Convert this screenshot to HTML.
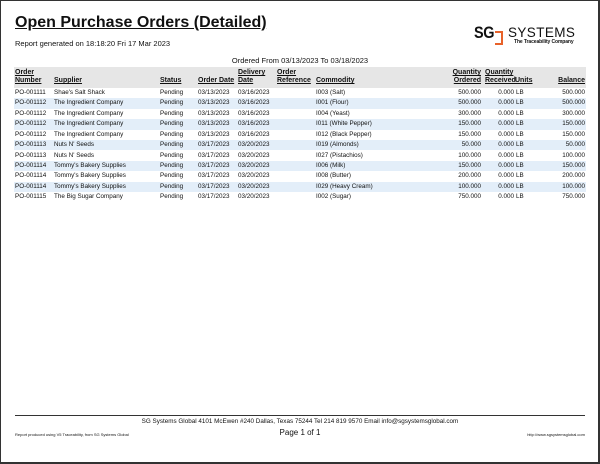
<!DOCTYPE html>
<html><head><style>
*{margin:0;padding:0;box-sizing:border-box}
body{width:600px;height:464px;background:#fff;font-family:"Liberation Sans",Arial,sans-serif;color:#111;position:relative;overflow:hidden}
.frame{position:absolute;left:0;top:0;width:600px;height:464px;border:1px solid #333;border-right:2px solid #333;border-bottom:2px solid #333}
.a{position:absolute;white-space:nowrap}
.h{position:absolute;left:14px;top:67px;width:572px;height:21px;background:#e6e6e6}
.hc{position:absolute;font-size:7px;font-weight:bold;text-decoration:underline;line-height:8px}
.row{position:absolute;left:14px;width:572px;height:10.4px;font-size:6.3px;line-height:10.4px}
.row span{position:absolute}
.r{text-align:right}
</style></head><body>
<div class="frame"></div>
<div class="a" style="left:15px;top:14px;font-size:16px;font-weight:bold;text-decoration:underline">Open Purchase Orders (Detailed)</div>
<div class="a" style="left:15px;top:39px;font-size:7.5px">Report generated on 18:18:20 Fri 17 Mar 2023</div>
<div class="a" style="left:474px;top:23px;font-size:17px;font-weight:bold;letter-spacing:-0.5px;transform:scaleX(0.85);transform-origin:0 0">SG</div>
<div class="a" style="left:495px;top:31px;width:8px;height:14px;border:2px solid #e8622a;border-left:none"></div>
<div class="a" style="left:508px;top:25px;font-size:13.5px;letter-spacing:0.4px">SYSTEMS</div>
<div class="a" style="left:514px;top:38.5px;font-size:5px;font-weight:bold;letter-spacing:-0.1px">The Traceability Company</div>
<div class="a" style="left:0;width:600px;text-align:center;top:56px;font-size:7.5px">Ordered From 03/13/2023 To 03/18/2023</div>
<div class="h"></div>
<div class="hc" style="left:15px;top:69px">Order<br>Number</div>
<div class="hc" style="left:54px;top:77px">Supplier</div>
<div class="hc" style="left:160px;top:77px">Status</div>
<div class="hc" style="left:198px;top:77px">Order Date</div>
<div class="hc" style="left:238px;top:69px">Delivery<br>Date</div>
<div class="hc" style="left:277px;top:69px">Order<br>Reference</div>
<div class="hc" style="left:316px;top:77px">Commodity</div>
<div class="hc r" style="left:440px;width:41px;top:69px">Quantity<br>Ordered</div>
<div class="hc" style="left:485px;top:69px">Quantity<br>Received</div>
<div class="hc" style="left:515px;top:77px">Units</div>
<div class="hc r" style="left:540px;width:45px;top:77px">Balance</div>
<div id="rows"></div>
<script>
var d=[["PO-001111","Shae's Salt Shack","03/13/2023","03/16/2023","I003 (Salt)","500.000"],
["PO-001112","The Ingredient Company","03/13/2023","03/16/2023","I001 (Flour)","500.000"],
["PO-001112","The Ingredient Company","03/13/2023","03/16/2023","I004 (Yeast)","300.000"],
["PO-001112","The Ingredient Company","03/13/2023","03/16/2023","I011 (White Pepper)","150.000"],
["PO-001112","The Ingredient Company","03/13/2023","03/16/2023","I012 (Black Pepper)","150.000"],
["PO-001113","Nuts N' Seeds","03/17/2023","03/20/2023","I019 (Almonds)","50.000"],
["PO-001113","Nuts N' Seeds","03/17/2023","03/20/2023","I027 (Pistachios)","100.000"],
["PO-001114","Tommy's Bakery Supplies","03/17/2023","03/20/2023","I006 (Milk)","150.000"],
["PO-001114","Tommy's Bakery Supplies","03/17/2023","03/20/2023","I008 (Butter)","200.000"],
["PO-001114","Tommy's Bakery Supplies","03/17/2023","03/20/2023","I029 (Heavy Cream)","100.000"],
["PO-001115","The Big Sugar Company","03/17/2023","03/20/2023","I002 (Sugar)","750.000"]];
var h="";d.forEach(function(r,i){h+='<div class="row" style="top:'+(87.8+i*10.45)+'px;background:'+(i%2?'#e3eef9':'#fff')+'"><span style="left:1px">'+r[0]+'</span><span style="left:40px">'+r[1]+'</span><span style="left:146px">Pending</span><span style="left:184px">'+r[2]+'</span><span style="left:224px">'+r[3]+'</span><span style="left:302px">'+r[4]+'</span><span class="r" style="left:420px;width:47px">'+r[5]+'</span><span class="r" style="left:470px;width:30px">0.000</span><span style="left:502px">LB</span><span class="r" style="left:520px;width:51px">'+r[5]+'</span></div>'});
document.getElementById("rows").innerHTML=h;
</script>
<div class="a" style="left:15px;top:415px;width:570px;height:1px;background:#333"></div>
<div class="a" style="left:0;width:600px;text-align:center;top:418px;font-size:6.3px">SG Systems Global 4101 McEwen #240 Dallas, Texas 75244 Tel 214 819 9570 Email info@sgsystemsglobal.com</div>
<div class="a" style="left:0;width:600px;text-align:center;top:428px;font-size:8px">Page 1 of 1</div>
<div class="a" style="left:15px;top:432px;font-size:4px">Report produced using V5 Traceability, from SG Systems Global</div>
<div class="a" style="right:15px;top:432px;font-size:4px">http://www.sgsystemsglobal.com</div>
</body></html>
